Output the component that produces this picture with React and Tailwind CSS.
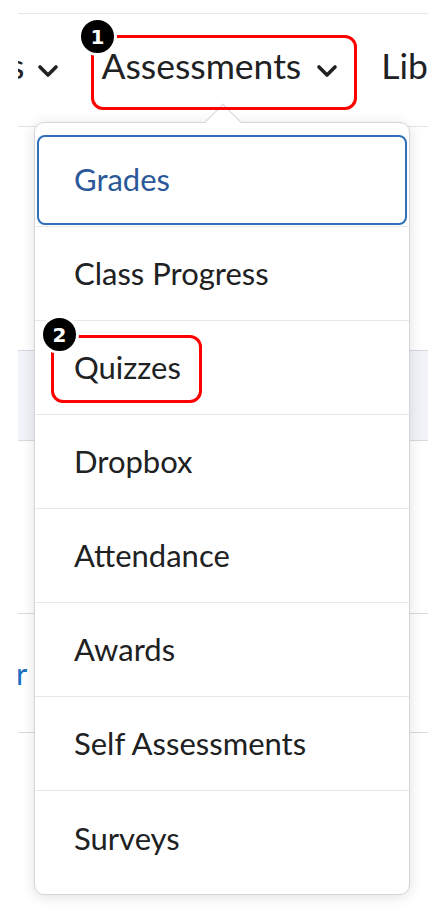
import React from 'react'

function Chevron({ className = '' }) {
  return (
    <svg className={className} width="22" height="14" viewBox="0 0 22 14" fill="none" stroke="#202122" strokeWidth={3.6} strokeLinecap="round" strokeLinejoin="round">
      <path d="M3 3l8 8 8-8" />
    </svg>
  )
}

function Badge({ n, className = '' }) {
  return (
    <div className={`absolute w-[39px] h-[39px] rounded-full bg-black border-[3px] border-white flex items-center justify-center text-white font-bold text-[20px] leading-none font-['DejaVu_Sans',sans-serif] ${className}`}>
      {n}
    </div>
  )
}

const items = ['Grades', 'Class Progress', 'Quizzes', 'Dropbox', 'Attendance', 'Awards', 'Self Assessments', 'Surveys']

export default function App() {
  return (
    <div className="relative w-[442px] h-[909px] bg-white overflow-hidden font-['Lato','Open_Sans',sans-serif] text-[#202122]">
      {/* page behind the menu */}
      <div className="mx-[18px] w-[410px] pt-[13px]">
        <div className="h-px bg-[#e6e7e9]" />
        <nav className="h-[112px] pt-[30px] flex items-start overflow-hidden text-[35.5px] leading-[44px] whitespace-nowrap">
          <span className="-ml-[9px]">s</span>
          <Chevron className="ml-[13px] mt-[20px]" />
          <span className="ml-[42px]">Assessments</span>
          <Chevron className="ml-[15px] mt-[20px]" />
          <span className="ml-[43px]">Lib</span>
        </nav>
        <div className="h-[224px] border-t border-[#e3e4e7]" />
        <div className="h-[91px] bg-[#f1f3f8] border-y border-[#d6d9df]" />
        <div className="h-[172px]" />
        <div className="h-[119px] border-t border-[#d6d9df] flex items-center overflow-hidden">
          <span className="-ml-[2px] text-[31px] text-[#1e6fc0]">r</span>
        </div>
        <div className="border-t border-[#d6d9df]" />
      </div>

      {/* dropdown menu */}
      <div className="absolute left-[34px] top-[122px] w-[376px] bg-white border border-[#d3d6db] rounded-[10px] shadow-[0_2px_14px_rgba(0,0,0,0.12)] pt-[10px] pb-[9px]">
        <div className="absolute left-[175px] -top-[14px] w-[26px] h-[26px] rotate-45 bg-white border-l border-t border-[#d3d6db]" />
        {items.map((label, i) => (
          <div key={label}
            className={`relative h-[94px] flex items-center pl-[39px] text-[31px] ${i < items.length - 1 ? 'border-b border-[#e3e7ee]' : ''} ${i === 0 ? 'text-[#2b5898]' : ''}`}>
            {i === 0 && <div className="absolute left-[2px] right-[2px] top-[2px] bottom-[1px] border-2 border-[#2f6fba] rounded-[8px]" />}
            <span className="relative">{label}</span>
          </div>
        ))}
      </div>

      {/* annotations */}
      <div className="absolute left-[91px] top-[35px] w-[266px] h-[75px] border-[3px] border-[#f00] rounded-[12px]" />
      <Badge n="1" className="left-[78px] top-[17px]" />
      <div className="absolute left-[51px] top-[335px] w-[151px] h-[68px] border-[3px] border-[#f00] rounded-[12px]" />
      <Badge n="2" className="left-[40px] top-[315px]" />
    </div>
  )
}
